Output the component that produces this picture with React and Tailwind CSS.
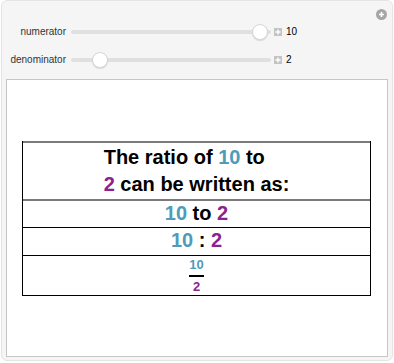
const TEAL = "text-[#4f9bba]";
const PURPLE = "text-[#8a2290]";

function Slider({ label, value, min, max }) {
  const frac = (value - min) / (max - min);
  return (
    <div className="flex h-[20px] items-center">
      <div className="w-[64px] text-right text-[10px] leading-none text-[#333]">{label}</div>
      <div className="relative ml-[5px] h-[20px] w-[200px]">
        <div className="absolute left-0 right-0 top-[8px] h-[4px] rounded-full bg-[#e0e0e0]" />
        <div
          className="absolute top-[2px] h-[16px] w-[16px] rounded-full border border-[#d6d6d6] bg-white shadow-[0_1px_1px_rgba(0,0,0,0.12)]"
          style={{ left: `${1 + frac * 180}px` }}
        />
      </div>
      <div className="ml-[3px] flex h-[8px] w-[8px] items-center justify-center bg-[#c4c4c4]">
        <svg width="6" height="6" viewBox="0 0 6 6">
          <path d="M3 0.5v5M0.5 3h5" stroke="#fff" strokeWidth="1.4" />
        </svg>
      </div>
      <div className="ml-[4px] text-[10px] leading-none text-black">{value}</div>
    </div>
  );
}

export default function App() {
  return (
    <div className="h-[363px] w-[394px] bg-white font-['Liberation_Sans',Arial,sans-serif]">
      <div className="relative ml-px h-[361px] w-[392px] rounded-[6px] border border-[#e4e4e4] bg-[#f5f5f5]">
        <div className="absolute right-[5px] top-[8px] flex h-[11px] w-[11px] items-center justify-center rounded-full bg-[#a6a6a6]">
          <svg width="7" height="7" viewBox="0 0 7 7">
            <path d="M3.5 1v5M1 3.5h5" stroke="#fff" strokeWidth="1.6" />
          </svg>
        </div>

        <div className="flex flex-col gap-[8px] pt-[21px]">
          <Slider label="numerator" value={10} min={1} max={10} />
          <Slider label="denominator" value={2} min={1} max={10} />
        </div>

        <div className="ml-[4px] mt-[9px] h-[278px] w-[382px] border border-[#c6c6c6] bg-white">
          <div className="ml-[15px] mt-[61px] w-[349px] border-x border-b border-black text-center text-[20px] font-bold text-black">
            <div className="border-y-2 border-[#7a7a7a] pt-[1px] h-[60px]">
              <div className="inline-block text-left leading-[27px]">
                The ratio of <span className={TEAL}>10</span> to
                <br />
                <span className={PURPLE}>2</span> can be written as:
              </div>
            </div>
            <div className="h-[27px] border-b border-black leading-[25px]">
              <span className={TEAL}>10</span> to <span className={PURPLE}>2</span>
            </div>
            <div className="h-[28px] border-b border-black leading-[25px]">
              <span className={TEAL}>10</span> : <span className={PURPLE}>2</span>
            </div>
            <div className="flex h-[39px] justify-center pt-[2px]">
              <div className="flex flex-col items-center text-[13px] leading-[13px]">
                <span className={TEAL}>10</span>
                <div className="mt-[4px] h-[2px] w-[15px] bg-black" />
                <span className={`mt-[3px] ${PURPLE}`}>2</span>
              </div>
            </div>
          </div>
        </div>
      </div>
    </div>
  );
}
